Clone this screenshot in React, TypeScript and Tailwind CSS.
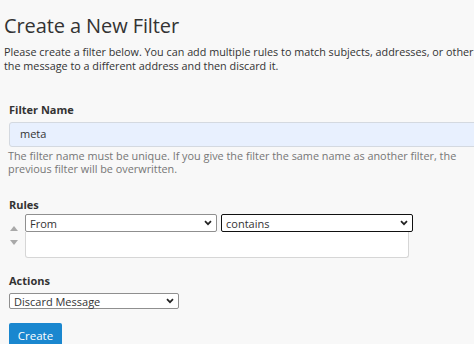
const font = { fontFamily: '"Open Sans", "Noto Sans", sans-serif' };

function Chevron() {
  return (
    <svg width="8" height="6" viewBox="0 0 8 6" className="shrink-0">
      <path d="M1 1.2l3 3 3-3" fill="none" stroke="#222" strokeWidth="1.7" />
    </svg>
  );
}

function FakeSelect({
  value,
  className,
}: {
  value: string;
  className: string;
}) {
  return (
    <div
      className={`flex items-center justify-between bg-white pl-[4px] pr-[4px] text-[11px] leading-none text-[#333] ${className}`}
    >
      <span>{value}</span>
      <Chevron />
    </div>
  );
}

export default function App() {
  return (
    <div
      className="w-[474px] h-[344px] overflow-hidden bg-[#f8f8f8] text-[#333]"
      style={font}
    >
      <div className="w-[620px] pl-[4px]">
        <h1 className="pt-[10px] text-[20px] leading-[31px] tracking-[-0.1px] text-[#333]">
          Create a New Filter
        </h1>
        <p className="mt-[4px] whitespace-nowrap text-[10.8px] leading-[14px] text-[#333]">
          Please create a filter below. You can add multiple rules to match subjects, addresses, or other
          criteria. You can redirect
          <br />
          the message to a different address and then discard it.
        </p>

        <div className="mt-[29px] pl-[5px]">
          <label className="block text-[11px] font-bold leading-[16px]">Filter Name</label>
          <div className="mt-[4px] flex h-[25px] w-[600px] items-center rounded-[3px] border border-[#d4d9e0] bg-[#e8f0fe] pl-[10px] text-[11px]">
            meta
          </div>
        </div>
        <p className="mt-[2px] whitespace-nowrap pl-[4px] text-[10.85px] leading-[13px] text-[#767676]">
          The filter name must be unique. If you give the filter the same name as another filter, the
          <br />
          previous filter will be overwritten.
        </p>

        <div className="mt-[22px] pl-[5px]">
          <label className="block text-[11px] font-bold leading-[16px]">Rules</label>
          <div className="mt-[1px] flex">
            <div className="flex w-[16px] flex-col items-start pl-[1px] pt-[12px]">
              <svg width="8" height="5" viewBox="0 0 8 5">
                <path d="M0 5L4 0l4 5z" fill="#a9a9a9" />
              </svg>
              <svg width="8" height="5" viewBox="0 0 8 5" className="mt-[9px]">
                <path d="M0 0h8L4 5z" fill="#a9a9a9" />
              </svg>
            </div>
            <div className="flex flex-col">
              <div className="flex gap-[4px]">
                <FakeSelect
                  value="From"
                  className="h-[18px] w-[192px] rounded-[2px] border border-[#8f8f8f]"
                />
                <FakeSelect
                  value="contains"
                  className="h-[18px] w-[192px] rounded-[2px] border-[1.5px] border-[#111]"
                />
              </div>
              <div className="h-[26px] w-[384px] rounded-b-[3px] border border-t-0 border-[#d6d6d6] bg-white" />
            </div>
          </div>
        </div>

        <div className="mt-[15px] pl-[5px]">
          <label className="block text-[11px] font-bold leading-[16px]">Actions</label>
          <FakeSelect
            value="Discard Message"
            className="mt-[4px] h-[16px] w-[170px] rounded-[2px] border border-[#8f8f8f]"
          />
          <button className="mt-[14px] h-[26px] w-[53px] rounded-t-[2px] bg-[#1a87cf] pb-[1px] text-[11.5px] text-white">
            Create
          </button>
        </div>
      </div>
    </div>
  );
}
